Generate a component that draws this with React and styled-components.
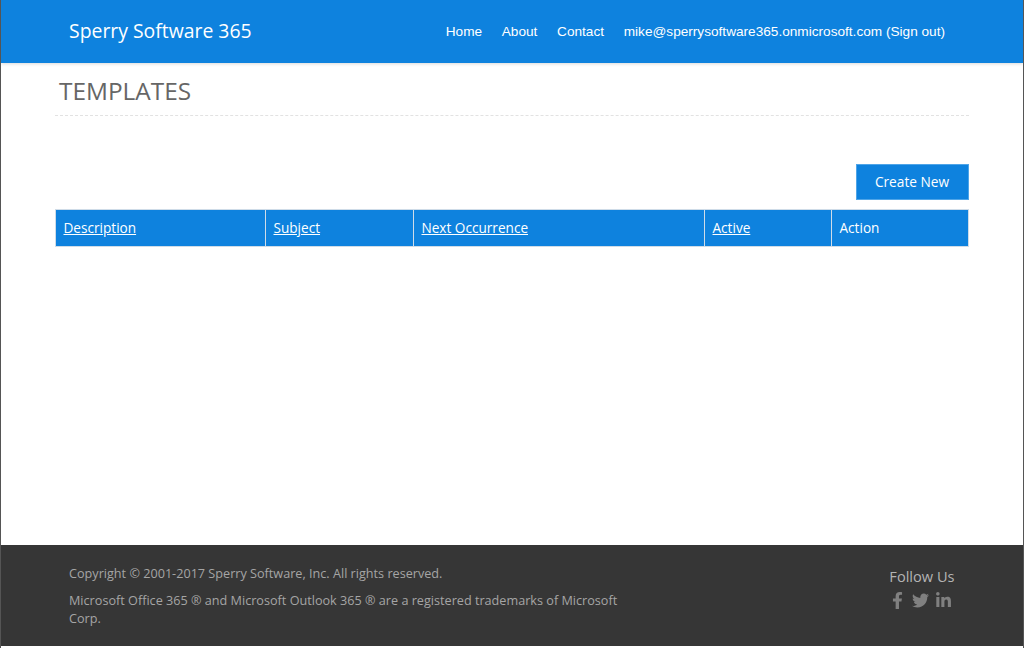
import React from "react";
import styled, { createGlobalStyle } from "styled-components";
import { FaFacebookF, FaTwitter, FaLinkedinIn } from "react-icons/fa";

const GlobalStyle = createGlobalStyle`
  html, body {
    margin: 0;
    padding: 0;
    background: #fff;
  }
  * {
    box-sizing: border-box;
  }
`;
const Page = styled.div`
  width: 1024px;
  height: 648px;
  display: flex;
  flex-direction: column;
  border-left: 1px solid #555;
  border-right: 1px solid #555;
  padding-bottom: 2px;
  font-family: "Open Sans", sans-serif;
  overflow: hidden;
`;
const Navbar = styled.header`
  height: 63px;
  flex: none;
  background-color: #0e82de;
  box-shadow: 0 1px 3px rgba(0, 0, 0, 0.15);
  display: flex;
  align-items: center;
  justify-content: space-between;
  padding: 0 78px 3px 68px;
`;
const Brand = styled.div`
  color: #fff;
  font-size: 19.4px;
`;
const NavLinks = styled.nav`
  display: flex;
  gap: 19.7px;
  padding-top: 2px;
`;
const NavLink = styled.a`
  color: #fff;
  font-family: "Liberation Sans", Arial, sans-serif;
  font-size: 13.64px;
`;
const Main = styled.main`
  flex: 1;
  padding: 0 54px;
`;
const Title = styled.h1`
  margin: 0;
  height: 53px;
  padding: 10px 0 0 4px;
  font-size: 24.4px;
  line-height: 36px;
  font-weight: 400;
  color: #666;
  border-bottom: 1px dashed #e2e2e2;
`;
const Toolbar = styled.div`
  display: flex;
  justify-content: flex-end;
  margin-top: 48px;
  margin-bottom: 10px;
`;
const Button = styled.button`
  width: 113px;
  height: 36px;
  border: 1px solid #4fa5e8;
  background-color: #0e82de;
  color: #fff;
  font-family: "Open Sans", sans-serif;
  font-size: 13.7px;
  padding: 0 1px 2px 0;
`;
const Table = styled.table`
  width: 913px;
  margin-top: -1px;
  border-collapse: collapse;
  table-layout: fixed;
`;
const HeadCell = styled.th`
  width: ${(p) => p.$w}px;
  height: 37px;
  padding: 0 8px 2px 7.5px;
  background-color: #0e82de;
  border: 1px solid #cfdce8;
  color: #fff;
  font-size: 13.6px;
  font-weight: 400;
  text-align: left;
  a {
    color: #fff;
    text-decoration: underline;
  }
`;
const Footer = styled.footer`
  height: 101px;
  flex: none;
  background-color: #363636;
  display: flex;
  justify-content: space-between;
  padding: 19px 68.5px 0 68px;
`;
const Legal = styled.div`
  width: 560px;
  color: #a5a5a5;
  font-size: 12.65px;
  line-height: 18px;
`;
const LegalLine = styled.p`
  margin: 0 0 9px;
`;
const Follow = styled.div`
  color: #b4b4b4;
  font-size: 14.6px;
  line-height: 24px;
`;
const Socials = styled.div`
  display: flex;
  align-items: center;
  gap: 6px;
  margin-top: 4px;
  color: #808080;
  font-size: 17px;
`;

const columns = [
  { label: "Description", w: 210, link: true },
  { label: "Subject", w: 148, link: true },
  { label: "Next Occurrence", w: 291, link: true },
  { label: "Active", w: 127, link: true },
  { label: "Action", w: 137 },
];

export default function App() {
  return (
    <Page>
      <GlobalStyle />
      <Navbar>
        <Brand>Sperry Software 365</Brand>
        <NavLinks>
          <NavLink>Home</NavLink>
          <NavLink>About</NavLink>
          <NavLink>Contact</NavLink>
          <NavLink>mike@sperrysoftware365.onmicrosoft.com (Sign out)</NavLink>
        </NavLinks>
      </Navbar>
      <Main>
        <Title>TEMPLATES</Title>
        <Toolbar>
          <Button>Create New</Button>
        </Toolbar>
        <Table>
          <thead>
            <tr>
              {columns.map((c) => (
                <HeadCell key={c.label} $w={c.w}>
                  {c.link ? <a href="#">{c.label}</a> : c.label}
                </HeadCell>
              ))}
            </tr>
          </thead>
        </Table>
      </Main>
      <Footer>
        <Legal>
          <LegalLine>Copyright © 2001-2017 Sperry Software, Inc. All rights reserved.</LegalLine>
          <LegalLine>
            Microsoft Office 365 ® and Microsoft Outlook 365 ® are a registered trademarks of Microsoft Corp.
          </LegalLine>
        </Legal>
        <Follow>
          Follow Us
          <Socials>
            <FaFacebookF />
            <FaTwitter />
            <FaLinkedinIn />
          </Socials>
        </Follow>
      </Footer>
    </Page>
  );
}
